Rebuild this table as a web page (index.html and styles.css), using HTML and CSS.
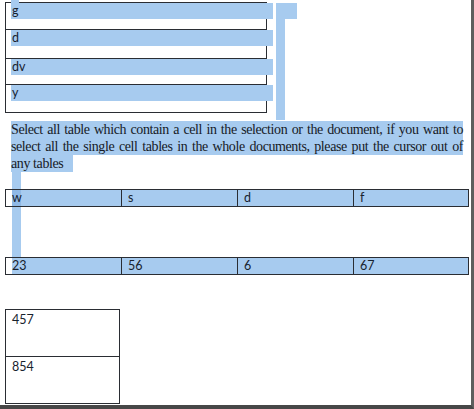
FILE: index.html
```html
<!DOCTYPE html>
<html>
<head>
<meta charset="utf-8">
<link rel="stylesheet" href="styles.css">
</head>
<body>
<div class="page">
  <div class="t1">
    <div class="row r1"><span class="hl">g</span></div>
    <div class="row r2"><span class="hl">d</span></div>
    <div class="row r3"><span class="hl">dv</span></div>
    <div class="row r4"><span class="hl">y</span></div>
  </div>
  <div class="bar-right"></div>
  <div class="bar-top"></div>
  <p class="para">
    <span class="ln full">Select all table which contain a cell in the selection or the document, if you want to</span>
    <span class="ln full">select all the single cell tables in the whole documents, please put the cursor out of</span>
    <span class="ln last">any tables&nbsp;&nbsp;</span>
  </p>
  <div class="trow t2">
    <div class="cell first">w</div>
    <div class="cell">s</div>
    <div class="cell">d</div>
    <div class="cell">f</div>
  </div>
  <div class="trow t3">
    <div class="cell first plain">23</div>
    <div class="cell">56</div>
    <div class="cell">6</div>
    <div class="cell">67</div>
  </div>
  <div class="t4">
    <div class="c4">457</div>
    <div class="c4">854</div>
  </div>
  <div class="bar-left"></div>
</div>
</body>
</html>
```
FILE: styles.css
```css
html, body {
  margin: 0;
  padding: 0;
  background: #ffffff;
}
.page {
  position: relative;
  box-sizing: border-box;
  width: 474px;
  height: 409px;
  padding: 2px 0 0 5px;
  border-right: 3px solid #5e5e5e;
  border-bottom: 4px solid #474747;
  overflow: hidden;
  font-family: Lato, "Open Sans", sans-serif;
  color: #17222e;
}
.t1 {
  width: 262px;
  box-sizing: border-box;
  border: 1px solid #2a2d33;
}
.row {
  border-bottom: 1px solid #2a2d33;
  font-size: 12.5px;
  line-height: 16px;
}
.row.r1 { height: 26px; }
.row.r2 { height: 28px; }
.row.r3 { height: 25px; }
.row.r4 { height: 27px; border-bottom: none; }
.hl {
  display: block;
  width: 261px;
  margin-left: 5px;
  padding-left: 1px;
  height: 16px;
  background: #a7cbef;
}
.bar-right {
  position: absolute;
  left: 276px;
  top: 3px;
  width: 9px;
  height: 117px;
  background: #a7cbef;
}
.bar-top {
  position: absolute;
  left: 276px;
  top: 3px;
  width: 21px;
  height: 16px;
  background: #a7cbef;
}
.para {
  margin: 8px 0 0 6px;
  width: 452px;
  font-family: "Liberation Serif", "Times New Roman", serif;
  font-size: 14px;
  letter-spacing: -0.4px;
  line-height: 17px;
  color: #161a26;
}
.ln {
  display: block;
  height: 17px;
  background: #a7cbef;
  white-space: nowrap;
}
.ln.full {
  text-align: justify;
  text-align-last: justify;
}
.ln.last {
  display: inline-block;
  width: 62px;
}
.trow {
  display: grid;
  grid-template-columns: 115px 115px 115px 114px;
  gap: 1px;
  padding: 1px;
  width: 464px;
  box-sizing: border-box;
  background: #2a2d33;
  font-size: 12.5px;
  line-height: 16px;
}
.t2 { margin-top: 17px; }
.t3 { margin-top: 50px; }
.cell {
  height: 16px;
  padding-left: 6px;
  background: #a7cbef;
  box-sizing: border-box;
}
.cell.first {
  background: linear-gradient(to right, #ffffff 6px, #8fb9e6 6px, #8fb9e6 15px, #a7cbef 15px);
}
.cell.first.plain {
  background: linear-gradient(to right, #ffffff 6px, #a7cbef 6px);
}
.t4 {
  margin-top: 34px;
  width: 115px;
  box-sizing: border-box;
  border: 1px solid #2a2d33;
}
.c4 {
  height: 46px;
  padding: 2px 0 0 6px;
  box-sizing: border-box;
  font-size: 12.5px;
  line-height: 16px;
}
.c4 + .c4 {
  border-top: 1px solid #2a2d33;
  height: 47px;
}
.bar-left {
  position: absolute;
  left: 12px;
  top: 172px;
  width: 9px;
  height: 85px;
  background: linear-gradient(to bottom, #a7cbef 17px, transparent 17px, transparent 35px, #a7cbef 35px);
}
.bar-left::before {
  content: "";
  position: absolute;
  left: -1px;
  top: -172px;
  width: 8px;
  height: 3px;
  background: #a7cbef;
}
```
